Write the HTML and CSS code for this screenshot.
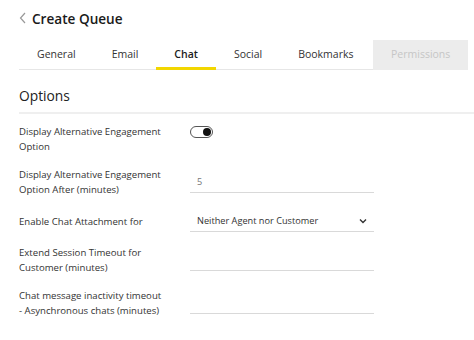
FILE: index.html
```html
<!DOCTYPE html>
<html lang="en">

<head>
    <meta charset="UTF-8">
    <meta name="viewport" content="width=device-width, initial-scale=1.0">
    <title>Create Queue</title>
    <link rel="stylesheet" href="styles.css">
</head>

<body>
    <div class="page">
        <h1 class="title">
            <span class="back">
                <svg width="8" height="12" viewBox="0 0 8 12">
                    <path d="M6 1 L1.5 6 L6 11" fill="none" stroke="#999" stroke-width="1.2" />
                </svg>
            </span>
            Create Queue
        </h1>

        <!-- Tabs -->
        <div class="tabs">
            <div class="tab">General</div>
            <div class="tab">Email</div>
            <div class="tab active">Chat</div>
            <div class="tab">Social</div>
            <div class="tab">Bookmarks</div>
            <div class="tab disabled">Permissions</div>
        </div>

        <h2 class="section">Options</h2>

        <div class="form">
            <div class="row">
                <div class="label">Display Alternative Engagement<br>Option</div>
                <div class="field top">
                    <span class="toggle"><span class="knob"></span></span>
                </div>
            </div>
            <div class="row">
                <div class="label">Display Alternative Engagement<br>Option After (minutes)</div>
                <div class="field">
                    <div class="input">5</div>
                </div>
            </div>
            <div class="row">
                <div class="label">Enable Chat Attachment for</div>
                <div class="field">
                    <div class="input select">
                        <span>Neither Agent nor Customer</span>
                        <svg width="8" height="6" viewBox="0 0 8 6">
                            <path d="M1 1.5 L4 4.5 L7 1.5" fill="none" stroke="#333" stroke-width="1.4" />
                        </svg>
                    </div>
                </div>
            </div>
            <div class="row">
                <div class="label">Extend Session Timeout for<br>Customer (minutes)</div>
                <div class="field">
                    <div class="input"></div>
                </div>
            </div>
            <div class="row">
                <div class="label">Chat message inactivity timeout<br>- Asynchronous chats (minutes)</div>
                <div class="field">
                    <div class="input"></div>
                </div>
            </div>
        </div>
    </div>
</body>

</html>
```

FILE: styles.css
```css
body {
    margin: 0;
    background-color: #fff;
    font-family: "Open Sans", "Noto Sans", sans-serif;
    color: #333;
}

.page {
    padding: 8px 0 0 19px;
}

.title {
    display: flex;
    align-items: center;
    gap: 5px;
    margin: 0;
    height: 20px;
    font-size: 13.6px;
    font-weight: 600;
    color: #1a1a1a;
}

.back {
    display: flex;
    align-items: center;
}

.tabs {
    display: flex;
    margin-top: 12px;
    width: 449px;
    border-bottom: 1px solid #e6e6e6;
}

.tab {
    padding: 0 18px;
    height: 28px;
    line-height: 28px;
    font-size: 10.5px;
    color: #333;
    border-bottom: 2px solid transparent;
    margin-bottom: -1px;
}

.tab.active {
    font-weight: 600;
    color: #1a1a1a;
    border-bottom: 3px solid #f2d600;
    height: 27px;
}

.tab.disabled {
    background-color: #ececec;
    color: #c6c6c6;
    margin-left: auto;
    width: 59px;
    text-align: center;
}

.section {
    margin: 16px 0 0;
    padding-bottom: 7px;
    font-size: 13.8px;
    font-weight: 400;
    color: #222;
    border-bottom: 2px solid #efefef;
}

.form {
    display: flex;
    flex-direction: column;
    gap: 13px;
    padding-top: 10px;
}

.row {
    display: flex;
    align-items: center;
}

.label {
    width: 171px;
    font-size: 9.6px;
    line-height: 15px;
    color: #333;
}

.field {
    width: 184px;
}

.field.top {
    align-self: flex-start;
    padding-top: 2px;
}

.toggle {
    display: block;
    position: relative;
    width: 21px;
    height: 10px;
    border: 1px solid #555;
    border-radius: 6px;
}

.knob {
    position: absolute;
    right: 1px;
    top: 1px;
    width: 8px;
    height: 8px;
    border-radius: 50%;
    background-color: #111;
}

.input {
    height: 21px;
    padding: 0 7px;
    font-size: 9.2px;
    line-height: 21px;
    color: #777;
    border-bottom: 1px solid #d9d9d9;
}

.select {
    display: flex;
    align-items: center;
    justify-content: space-between;
    color: #333;
}
```
